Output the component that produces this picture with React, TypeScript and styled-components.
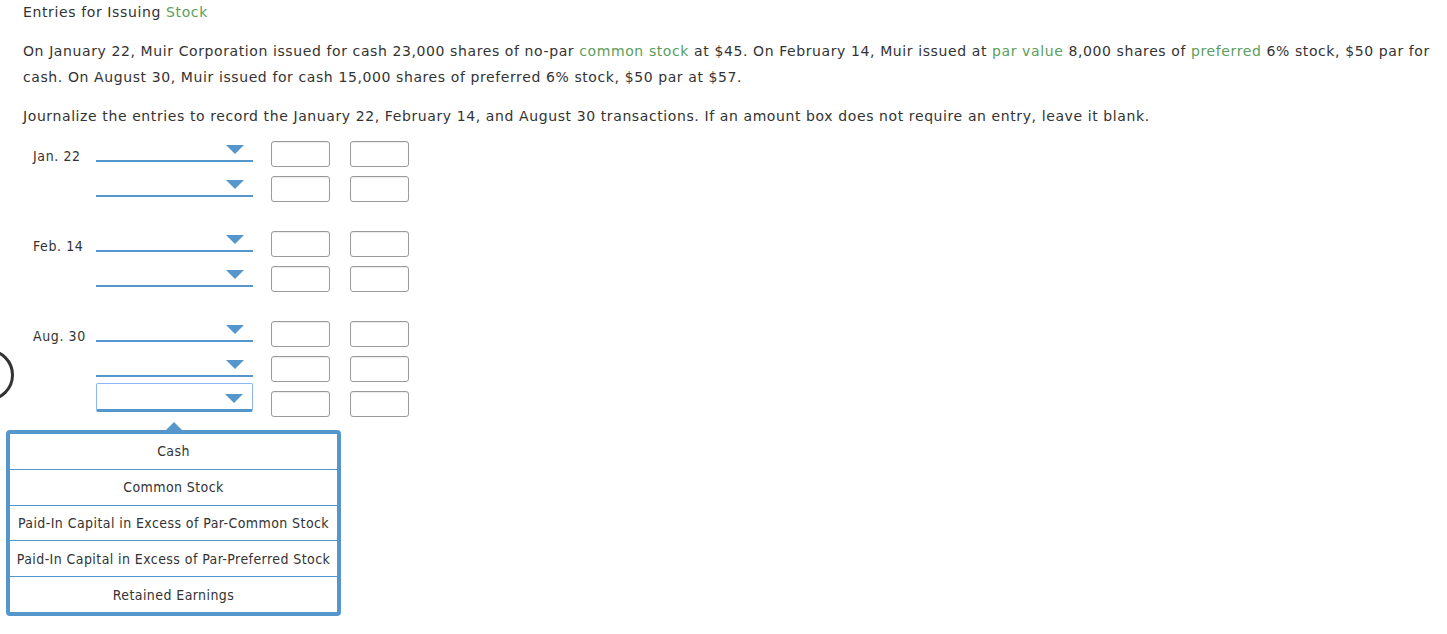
import React from 'react';
import styled, { createGlobalStyle } from 'styled-components';

const Global = createGlobalStyle`
  html, body {
    margin: 0;
    padding: 0;
    background: #fff;
  }
  body {
    font-family: "DejaVu Sans", Verdana, sans-serif;
    color: #333;
    overflow: hidden;
  }
`;

const Page = styled.div`
  position: relative;
  width: 1447px;
  height: 634px;
  padding: 0 0 0 23px;
  box-sizing: border-box;
`;

const Title = styled.div`
  font-size: 14px;
  letter-spacing: 0.62px;
  line-height: 24px;
`;

const Para = styled.p`
  margin: ${(p: { $top: number }) => p.$top}px 0 0;
  font-size: 14px;
  letter-spacing: 0.6px;
  line-height: 26px;
`;

const Term = styled.span`
  color: #5b9d5b;
`;

const Entries = styled.div`
  margin-top: 12px;
  display: flex;
  flex-direction: column;
  gap: 29px;
`;

const Group = styled.div`
  display: flex;
  flex-direction: column;
  gap: 9px;
`;

const Row = styled.div`
  display: flex;
  align-items: flex-start;
  height: 26px;
`;

const DateLabel = styled.div`
  width: 63px;
  padding: 5px 0 0 10px;
  font-family: "DejaVu Sans Condensed", Tahoma, sans-serif;
  font-size: 14px;
  letter-spacing: 0.6px;
  line-height: 20px;
  color: #333;
`;

const Select = styled.div<{ $focused?: boolean }>`
  position: relative;
  width: 157px;
  box-sizing: border-box;
  height: ${(p) => (p.$focused ? '29px' : '21px')};
  margin-top: ${(p) => (p.$focused ? '-8px' : '0')};
  border: ${(p) => (p.$focused ? '1px solid #8bb8f5' : 'none')};
  border-bottom: ${(p) => (p.$focused ? '3px solid #5596cc' : '2px solid #5596cc')};
  border-radius: ${(p) => (p.$focused ? '2px' : '0')};
  display: flex;
  align-items: ${(p) => (p.$focused ? 'center' : 'flex-start')};
  justify-content: flex-end;
  padding: 4px 9px 0 0;
`;

const Arrow = styled.span`
  width: 0;
  height: 0;
  border-left: 9px solid transparent;
  border-right: 9px solid transparent;
  border-top: 9px solid #5596cc;
`;

const Amount = styled.div`
  width: 59px;
  height: 26px;
  box-sizing: border-box;
  margin-left: ${(p: { $gap: number }) => p.$gap}px;
  border: 1px solid #9a9a9a;
  border-radius: 3px;
  box-shadow: inset 0 1px 1px rgba(0, 0, 0, 0.08);
  background: #fff;
`;

const Popup = styled.div`
  position: absolute;
  left: -91px;
  top: 46px;
  width: 335px;
  z-index: 5;
  &::before {
    content: "";
    position: absolute;
    left: 160px;
    top: -8px;
    border-left: 8px solid transparent;
    border-right: 8px solid transparent;
    border-bottom: 8px solid #5596cc;
  }
`;

const Menu = styled.ul`
  list-style: none;
  margin: 0;
  padding: 0;
  border: 4px solid #5596cc;
  border-radius: 4px;
  background: #fff;
`;

const Option = styled.li`
  height: 34.8px;
  display: flex;
  align-items: center;
  justify-content: center;
  font-family: "DejaVu Sans Condensed", Tahoma, sans-serif;
  font-size: 14px;
  letter-spacing: 0.42px;
  color: #333;
  white-space: nowrap;
  & + & {
    border-top: 1px solid #5596cc;
  }
`;

const Ring = styled.div`
  position: absolute;
  left: -38px;
  top: 349px;
  width: 46px;
  height: 46px;
  border: 3px solid #333;
  border-radius: 50%;
`;

const options = [
  'Cash',
  'Common Stock',
  'Paid-In Capital in Excess of Par-Common Stock',
  'Paid-In Capital in Excess of Par-Preferred Stock',
  'Retained Earnings',
];

const groups = [
  { date: 'Jan. 22', rows: 2 },
  { date: 'Feb. 14', rows: 2 },
  { date: 'Aug. 30', rows: 3 },
];

export default function App() {
  return (
    <>
      <Global />
      <Page>
        <Title>
          Entries for Issuing <Term>Stock</Term>
        </Title>
        <Para $top={14}>
          On January 22, Muir Corporation issued for cash 23,000 shares of no-par{' '}
          <Term>common stock</Term> at $45. On February 14, Muir issued at{' '}
          <Term>par value</Term> 8,000 shares of <Term>preferred</Term> 6% stock, $50 par for
          cash. On August 30, Muir issued for cash 15,000 shares of preferred 6% stock, $50 par
          at $57.
        </Para>
        <Para $top={13}>
          Journalize the entries to record the January 22, February 14, and August 30
          transactions. If an amount box does not require an entry, leave it blank.
        </Para>
        <Entries>
          {groups.map((g) => (
            <Group key={g.date}>
              {Array.from({ length: g.rows }).map((_, i) => {
                const focused = g.rows === 3 && i === 2;
                return (
                  <Row key={i}>
                    <DateLabel>{i === 0 ? g.date : ''}</DateLabel>
                    <Select $focused={focused}>
                      <Arrow />
                      {focused && (
                        <Popup>
                          <Menu>
                            {options.map((o) => (
                              <Option key={o}>{o}</Option>
                            ))}
                          </Menu>
                        </Popup>
                      )}
                    </Select>
                    <Amount $gap={18} />
                    <Amount $gap={20} />
                  </Row>
                );
              })}
            </Group>
          ))}
        </Entries>
        <Ring />
      </Page>
    </>
  );
}
